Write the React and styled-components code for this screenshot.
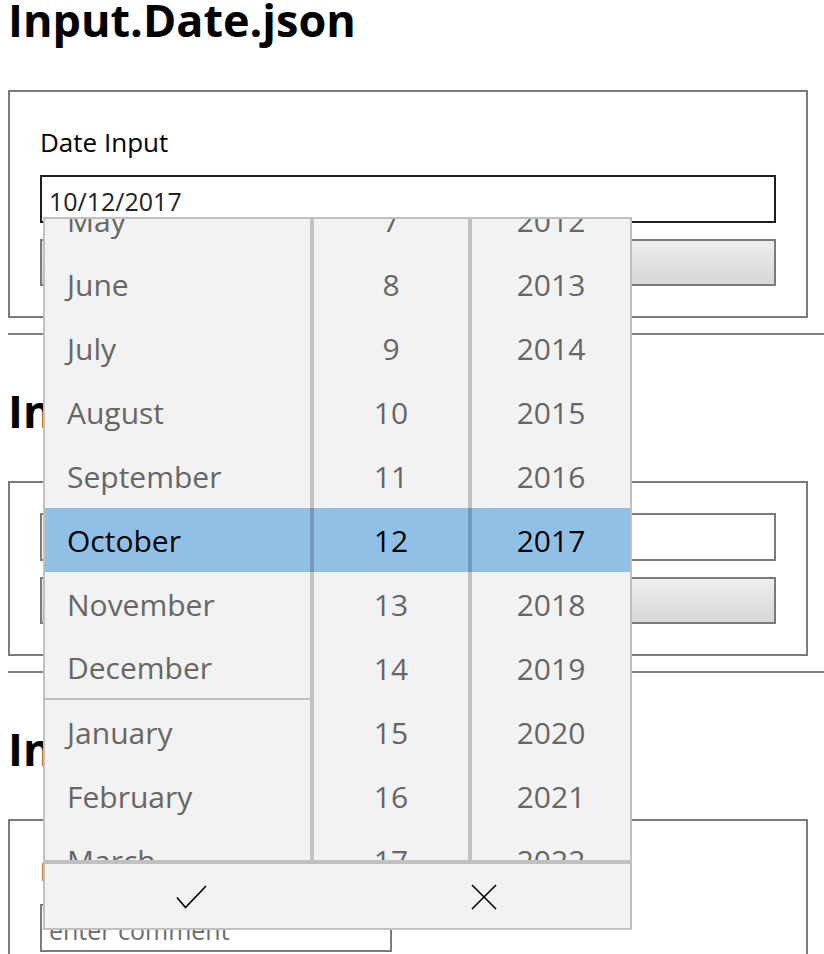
import React from "react";
import styled, { createGlobalStyle } from "styled-components";

const GlobalStyle = createGlobalStyle`
  html, body {
    margin: 0;
    padding: 0;
    overflow: hidden;
    background: #ffffff;
  }
  body {
    font-family: "Segoe UI", "Open Sans", "Noto Sans", sans-serif;
    color: #000000;
  }
`;

const months = ["May", "June", "July", "August", "September", "October", "November", "December", "January", "February", "March"];
const days = [7, 8, 9, 10, 11, 12, 13, 14, 15, 16, 17];
const years = [2012, 2013, 2014, 2015, 2016, 2017, 2018, 2019, 2020, 2021, 2022];
const SELECTED = 5;

function App() {
  return (
    <>
      <GlobalStyle />
      <Page>
        <Section>
          <Heading $first>Input.Date.json</Heading>
          <Card>
            <Label>Date Input</Label>
            <TextInput $focused readOnly value="10/12/2017" />
            <Button />
          </Card>
          <Divider />
        </Section>
        <Section>
          <Heading>Input.Time.json</Heading>
          <Card>
            <TextInput readOnly value="" />
            <Button />
          </Card>
          <Divider />
        </Section>
        <Section>
          <Heading>Input.Text.json</Heading>
          <Card>
            <Label>Input comment</Label>
            <TextInput $narrow readOnly placeholder="enter comment" />
            <Button />
          </Card>
        </Section>

        <Picker>
          <Columns>
            <Column>
              <List>
                {months.map((m, i) => (
                  <MonthRow key={m} $selected={i === SELECTED} $wrap={m === "December"}>
                    {m}
                  </MonthRow>
                ))}
              </List>
            </Column>
            <Column $divided>
              <List>
                {days.map((d, i) => (
                  <CenterRow key={d} $selected={i === SELECTED}>
                    {d}
                  </CenterRow>
                ))}
              </List>
            </Column>
            <Column $divided>
              <List>
                {years.map((y, i) => (
                  <CenterRow key={y} $selected={i === SELECTED}>
                    {y}
                  </CenterRow>
                ))}
              </List>
            </Column>
          </Columns>
          <Footer>
            <FooterButton aria-label="Accept">
              <svg width="31" height="24" viewBox="0 0 31 24" fill="none">
                <polyline points="1,12.5 9.5,22.5 30,1" stroke="#000" strokeWidth="1.6" />
              </svg>
            </FooterButton>
            <FooterButton aria-label="Dismiss">
              <svg width="26" height="26" viewBox="0 0 26 26" fill="none">
                <line x1="1" y1="1" x2="25" y2="25" stroke="#000" strokeWidth="1.6" />
                <line x1="25" y1="1" x2="1" y2="25" stroke="#000" strokeWidth="1.6" />
              </svg>
            </FooterButton>
          </Footer>
        </Picker>
      </Page>
    </>
  );
}

export default App;

const Page = styled.div`
  position: relative;
  padding-left: 8px;
  height: 954px;
`;

const Section = styled.section`
  display: flex;
  flex-direction: column;
`;

const Heading = styled.h1`
  margin: ${(p) => (p.$first ? "-4px" : "52px")} 0 46px 0;
  font-size: 45px;
  line-height: 48px;
  font-weight: 700;
  color: #000;
`;

const Card = styled.div`
  box-sizing: border-box;
  width: 800px;
  border: 2px solid #7a7a7a;
  padding: 30px 30px 30px 30px;
  display: flex;
  flex-direction: column;
`;

const Label = styled.div`
  font-size: 26px;
  line-height: 36px;
  margin: 2px 0 15px 0;
  color: #000;
`;

const TextInput = styled.input`
  box-sizing: border-box;
  width: ${(p) => (p.$narrow ? "352px" : "736px")};
  height: 48px;
  margin: 0 0 16px 0;
  padding: 3px 7px 0 7px;
  border: 2px solid ${(p) => (p.$focused ? "#1e1e1e" : "#7a7a7a")};
  border-radius: 0;
  outline: none;
  font-family: inherit;
  font-size: 25px;
  color: #222;
  background: #fff;
  &::placeholder {
    color: #6b6b6b;
  }
`;

const Button = styled.div`
  box-sizing: border-box;
  width: 736px;
  height: 47px;
  border: 2px solid #7a7a7a;
  background: linear-gradient(to bottom, #eeeeee, #d6d6d6);
`;

const Divider = styled.div`
  height: 2px;
  margin-top: 15px;
  background: #808080;
`;

const Picker = styled.div`
  position: absolute;
  left: 43px;
  top: 217px;
  width: 589px;
  height: 713px;
  box-sizing: border-box;
  border: 2px solid #c0c0c0;
  background: #f2f2f2;
  display: flex;
  flex-direction: column;
  z-index: 10;
`;

const Columns = styled.div`
  flex: 1;
  display: grid;
  grid-template-columns: 265px 158px 162px;
  background: linear-gradient(
    to bottom,
    #f2f2f2 289px,
    #91c0e6 289px,
    #91c0e6 353px,
    #f2f2f2 353px
  );
  min-height: 0;
`;

const Column = styled.div`
  overflow: hidden;
  border-left: ${(p) => (p.$divided ? "4px solid rgba(0, 0, 0, 0.2)" : "none")};
`;

const List = styled.div`
  margin-top: -31px;
  display: flex;
  flex-direction: column;
`;

const Row = styled.div`
  box-sizing: border-box;
  height: 64px;
  display: flex;
  align-items: center;
  font-size: 30px;
  color: ${(p) => (p.$selected ? "#000000" : "#666666")};
`;

const MonthRow = styled(Row)`
  padding-left: 22px;
  border-bottom: ${(p) => (p.$wrap ? "2px solid #c0c0c0" : "none")};
`;

const CenterRow = styled(Row)`
  justify-content: center;
`;

const Footer = styled.div`
  box-sizing: border-box;
  height: 68px;
  border-top: 4px solid #c0c0c0;
  display: grid;
  grid-template-columns: 1fr 1fr;
`;

const FooterButton = styled.div`
  display: flex;
  align-items: center;
  justify-content: center;
  padding-top: 1px;
`;
